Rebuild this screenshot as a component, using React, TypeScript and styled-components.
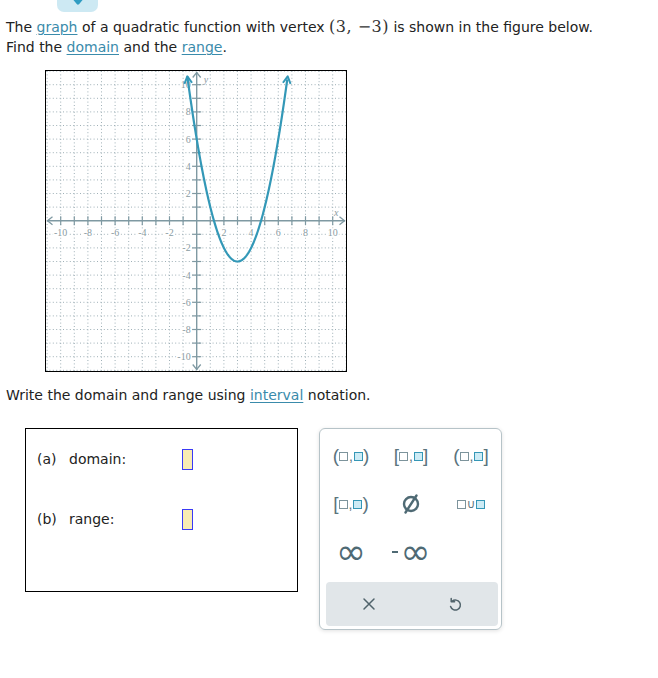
import React from 'react';
import styled, { createGlobalStyle } from 'styled-components';

const GlobalStyle = createGlobalStyle`
  body {
    margin: 0;
    font-family: "DejaVu Sans", Verdana, sans-serif;
    color: #222;
    background: #fff;
  }
`;

const Page = styled.div`
  width: 658px;
  height: 678px;
  display: flex;
  flex-direction: column;
`;

const Tab = styled.div`
  margin-left: 57px;
  width: 41px;
  height: 12px;
  background: #cde9f3;
  border-radius: 0 0 7px 7px;
  display: flex;
  justify-content: center;
`;

const Prompt = styled.p`
  margin: 5px 0 0 0;
  padding: 0 6px;
  font-size: 14px;
  line-height: 20px;
`;

const Link = styled.span`
  color: #3a8bab;
  text-decoration: underline;
  text-underline-offset: 2px;
  text-decoration-thickness: 1px;
`;

const MathText = styled.span`
  font-family: "DejaVu Serif", "Liberation Serif", serif;
  font-size: 16px;
  color: #333;
  letter-spacing: 0.5px;
`;

const Figure = styled.div`
  margin: 13px 0 0 45px;
  width: 300px;
  height: 300px;
  border: 1px solid #000;
`;

const Instruction = styled.p`
  margin: 13px 0 0 0;
  padding: 0 6px;
  font-size: 14px;
  line-height: 20px;
`;

const AnswerRow = styled.div`
  margin: 23px 0 0 25px;
  display: flex;
  align-items: flex-start;
  gap: 21px;
`;

const AnswerBox = styled.div`
  box-sizing: border-box;
  width: 273px;
  height: 164px;
  border: 1px solid #000;
  padding: 19px 0 0 11px;
  display: flex;
  flex-direction: column;
  gap: 38px;
`;

const PartRow = styled.div`
  display: grid;
  grid-template-columns: 32px 113px auto;
  align-items: center;
  height: 22px;
  font-size: 14px;
`;

const PartTag = styled.span`
  color: #222;
`;

const Blank = styled.span`
  box-sizing: border-box;
  display: block;
  width: 11px;
  height: 21px;
  background: #f9ecb3;
  border: 1px solid #3a3af5;
`;

const Keypad = styled.div`
  box-sizing: border-box;
  width: 183px;
  height: 202px;
  border: 1px solid #b6c3c8;
  border-radius: 6px;
  box-shadow: 0 1px 4px rgba(0, 0, 0, 0.12);
  padding: 3px 0 0 1px;
  display: flex;
  flex-direction: column;
`;

const KeyGrid = styled.div`
  display: grid;
  grid-template-columns: repeat(3, 60px);
  grid-auto-rows: 48px;
`;

const Key = styled.div`
  display: flex;
  align-items: center;
  justify-content: center;
  color: #4f6a74;
  overflow: hidden;
`;

const Bracket = styled.span`
  font-family: "Liberation Sans", Arial, sans-serif;
  font-size: 19px;
  line-height: 1;
  color: #5b747d;
  margin-top: -2px;
`;

const Comma = styled.span`
  font-family: "Liberation Sans", Arial, sans-serif;
  font-size: 14px;
  color: #5b747d;
  margin: 0 1px;
  align-self: flex-end;
  margin-bottom: 16px;
`;

const Square = styled.span<{ $filled?: boolean }>`
  box-sizing: border-box;
  display: inline-block;
  width: 9px;
  height: 9px;
  border: 1.5px solid ${({ $filled }) => ($filled ? '#3597b6' : '#7d949c')};
  background: ${({ $filled }) => ($filled ? '#cdebf5' : '#fff')};
`;

const Union = styled.span`
  font-family: "DejaVu Sans", sans-serif;
  font-size: 12px;
  color: #5b747d;
  margin: 0 1px;
`;

const InfinityGlyph = styled.span`
  font-family: "DejaVu Sans", sans-serif;
  font-size: 36px;
  color: #4f6a74;
  line-height: 24px;
  height: 24px;
  display: inline-flex;
  align-items: center;
`;

const Dash = styled.span`
  display: inline-block;
  width: 6px;
  height: 2.5px;
  background: #4f6a74;
  margin-right: 3px;
`;

const ActionBar = styled.div`
  margin: 6px 0 0 5px;
  width: 172px;
  height: 44px;
  background: #e1e6e9;
  border-radius: 4px;
  display: grid;
  grid-template-columns: 1fr 1fr;
`;

const S = 13.6;
const OX = 150.7;
const OY = 149.7;
const px = (x: number) => OX + x * S;
const py = (y: number) => OY - y * S;

const GRID = '#9fb0b7';
const AXIS = '#7f99a2';
const LABEL = '#8a9ba2';
const CURVE = '#3398b7';

const Chevron = ({ x, y, dir }: { x: number; y: number; dir: 'l' | 'r' | 'u' | 'd' }) => {
  const a = 5;
  const b = 4;
  const pts =
    dir === 'l'
      ? `${x + a},${y - b} ${x},${y} ${x + a},${y + b}`
      : dir === 'r'
      ? `${x - a},${y - b} ${x},${y} ${x - a},${y + b}`
      : dir === 'u'
      ? `${x - b},${y + a} ${x},${y} ${x + b},${y + a}`
      : `${x - b},${y - a} ${x},${y} ${x + b},${y - a}`;
  return <polyline points={pts} fill="none" stroke={AXIS} strokeWidth={1.3} />;
};

const Graph = () => {
  const ints = Array.from({ length: 23 }, (_, i) => i - 11);
  const evens = [-10, -8, -6, -4, -2, 2, 4, 6, 8, 10];
  const f = (x: number) => (x - 3) * (x - 3) - 3;
  const x0 = 3 - 3.69;
  const x1 = 3 + 3.69;
  const pts: string[] = [];
  for (let x = x0; x <= x1 + 1e-6; x += 0.05) {
    pts.push(`${px(x).toFixed(2)},${py(f(x)).toFixed(2)}`);
  }
  const arrow = (x: number) => {
    const tx = px(x);
    const ty = py(f(x));
    const slope = 2 * (x - 3);
    const dxu = x < 3 ? -1 : 1;
    let dx = dxu;
    let dy = -slope * dxu;
    const len = Math.hypot(dx, dy);
    dx /= len;
    dy /= len;
    const back = 8;
    const ang = 0.5;
    const p = (sgn: number) => {
      const c = Math.cos(sgn * ang);
      const s = Math.sin(sgn * ang);
      const rx = -dx * c + dy * s;
      const ry = -dx * s - dy * c;
      return `${(tx + rx * back).toFixed(2)},${(ty + ry * back).toFixed(2)}`;
    };
    return (
      <polyline
        points={`${p(1)} ${tx},${ty} ${p(-1)}`}
        fill="none"
        stroke={CURVE}
        strokeWidth={2}
        strokeLinejoin="round"
      />
    );
  };
  return (
    <svg width={300} height={300} viewBox="0 0 300 300">
      {ints.map((i) => (
        <g key={`g${i}`}>
          {i !== 0 && (
            <line x1={px(i)} y1={0} x2={px(i)} y2={300} stroke={GRID} strokeWidth={1} strokeDasharray="1 2.4" />
          )}
          {i !== 0 && (
            <line x1={0} y1={py(i)} x2={300} y2={py(i)} stroke={GRID} strokeWidth={1} strokeDasharray="1 2.4" />
          )}
        </g>
      ))}
      {evens.map((v) => (
        <text
          key={`xl${v}`}
          x={px(v)}
          y={py(0) + 15}
          textAnchor="middle"
          fontFamily="'Liberation Serif', serif"
          fontSize={10}
          fill={LABEL}
          stroke="#fff"
          strokeWidth={3}
          paintOrder="stroke"
        >
          {v < 0 ? `-${-v}` : v}
        </text>
      ))}
      {evens.map((v) => (
        <text
          key={`yl${v}`}
          x={px(0) - 6}
          y={py(v) + 3.5}
          textAnchor="end"
          fontFamily="'Liberation Serif', serif"
          fontSize={10}
          fill={LABEL}
          stroke="#fff"
          strokeWidth={3}
          paintOrder="stroke"
        >
          {v < 0 ? `-${-v}` : v}
        </text>
      ))}
      <line x1={1} y1={py(0)} x2={299} y2={py(0)} stroke={AXIS} strokeWidth={1.4} />
      <line x1={px(0)} y1={1} x2={px(0)} y2={299} stroke={AXIS} strokeWidth={1.4} />
      {ints
        .filter((i) => i !== 0 && Math.abs(i) <= 10)
        .map((i) => (
          <g key={`t${i}`}>
            <line x1={px(i)} y1={py(0) - 4.5} x2={px(i)} y2={py(0) + 4.5} stroke={AXIS} strokeWidth={1.2} />
            <line x1={px(0) - 4.5} y1={py(i)} x2={px(0) + 4.5} y2={py(i)} stroke={AXIS} strokeWidth={1.2} />
          </g>
        ))}
      <Chevron x={1.5} y={py(0)} dir="l" />
      <Chevron x={298.5} y={py(0)} dir="r" />
      <Chevron x={px(0)} y={1.5} dir="u" />
      <Chevron x={px(0)} y={298.5} dir="d" />
      <text x={px(0) + 7} y={12} fontFamily="'Liberation Serif', serif" fontStyle="italic" fontSize={10} fill={LABEL}>
        y
      </text>
      <text x={288} y={py(0) - 5} fontFamily="'Liberation Serif', serif" fontStyle="italic" fontSize={10} fill={LABEL}>
        x
      </text>
      <polyline points={pts.join(' ')} fill="none" stroke={CURVE} strokeWidth={2.2} strokeLinejoin="round" />
      {arrow(x0)}
      {arrow(x1)}
    </svg>
  );
};

const Interval = ({ open, close }: { open: string; close: string }) => (
  <Key>
    <Bracket>{open}</Bracket>
    <Square />
    <Comma>,</Comma>
    <Square $filled />
    <Bracket>{close}</Bracket>
  </Key>
);

const EmptySet = () => (
  <svg width={22} height={22} viewBox="0 0 22 22">
    <circle cx={11} cy={11} r={7} fill="none" stroke="#4f6a74" strokeWidth={2.4} />
    <line x1={16.5} y1={2.5} x2={5.5} y2={19.5} stroke="#4f6a74" strokeWidth={2.4} strokeLinecap="round" />
  </svg>
);

const ClearIcon = () => (
  <svg width={14} height={14} viewBox="0 0 14 14">
    <path d="M2 2 L12 12 M12 2 L2 12" stroke="#50636b" strokeWidth={1.5} strokeLinecap="round" />
  </svg>
);

const UndoIcon = () => (
  <svg width={14} height={15} viewBox="0 0 14 15">
    <path d="M4.2 4.2 A5 5 0 1 1 2.6 9.5" fill="none" stroke="#50636b" strokeWidth={1.5} strokeLinecap="round" />
    <path d="M3.2 1.5 L3.2 4.8 L6.6 4.8" fill="none" stroke="#50636b" strokeWidth={1.5} strokeLinecap="round" strokeLinejoin="round" />
  </svg>
);

const App = () => (
  <Page>
    <GlobalStyle />
    <Tab>
      <svg width={14} height={6} viewBox="0 0 14 6">
        <polyline points="2,-3 7,3 12,-3" fill="none" stroke="#2f9cc2" strokeWidth={3.2} strokeLinecap="round" strokeLinejoin="round" />
      </svg>
    </Tab>
    <Prompt>
      The <Link>graph</Link> of a quadratic function with vertex <MathText>(3, −3)</MathText> is shown in the figure below.
      <br />
      Find the <Link>domain</Link> and the <Link>range</Link>.
    </Prompt>
    <Figure>
      <Graph />
    </Figure>
    <Instruction>
      Write the domain and range using <Link>interval</Link> notation.
    </Instruction>
    <AnswerRow>
      <AnswerBox>
        <PartRow>
          <PartTag>(a)</PartTag>
          <span>domain:</span>
          <Blank />
        </PartRow>
        <PartRow>
          <PartTag>(b)</PartTag>
          <span>range:</span>
          <Blank />
        </PartRow>
      </AnswerBox>
      <Keypad>
        <KeyGrid>
          <Interval open="(" close=")" />
          <Interval open="[" close="]" />
          <Interval open="(" close="]" />
          <Interval open="[" close=")" />
          <Key>
            <EmptySet />
          </Key>
          <Key>
            <Square />
            <Union>∪</Union>
            <Square $filled />
          </Key>
          <Key>
            <InfinityGlyph>∞</InfinityGlyph>
          </Key>
          <Key>
            <Dash />
            <InfinityGlyph>∞</InfinityGlyph>
          </Key>
        </KeyGrid>
        <ActionBar>
          <Key>
            <ClearIcon />
          </Key>
          <Key>
            <UndoIcon />
          </Key>
        </ActionBar>
      </Keypad>
    </AnswerRow>
  </Page>
);

export default App;
